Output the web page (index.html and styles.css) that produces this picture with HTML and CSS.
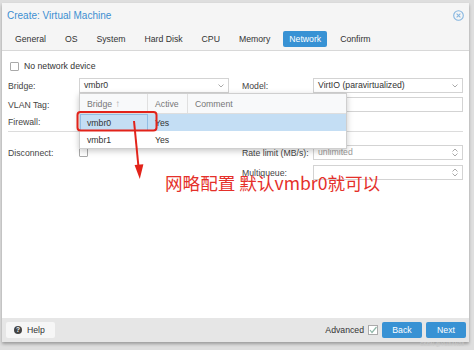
FILE: index.html
```html
<!DOCTYPE html>
<html lang="zh">
<head>
    <meta charset="UTF-8">
    <title>Create: Virtual Machine</title>
    <link rel="stylesheet" href="styles.css">
</head>
<body>
    <div class="screen">
        <div class="window">
            <div class="titlebar">
                <span class="title">Create: Virtual Machine</span>
                <svg class="close-icon" width="11" height="11" viewBox="0 0 11 11">
                    <circle cx="5.5" cy="5.5" r="4.8" fill="none" stroke="#86b6e0" stroke-width="1.1"/>
                    <path d="M3.6 3.6 L7.4 7.4 M7.4 3.6 L3.6 7.4" stroke="#86b6e0" stroke-width="1.1"/>
                </svg>
            </div>

            <div class="tabs">
                <span class="tab">General</span>
                <span class="tab">OS</span>
                <span class="tab">System</span>
                <span class="tab">Hard Disk</span>
                <span class="tab">CPU</span>
                <span class="tab">Memory</span>
                <span class="tab active">Network</span>
                <span class="tab">Confirm</span>
            </div>

            <div class="panel">
                <div class="check-row">
                    <span class="checkbox"></span>
                    <span>No network device</span>
                </div>

                <div class="form-grid top">
                    <div class="field-row">
                        <span class="label">Bridge:</span>
                        <div class="combo-wrap">
                            <div class="input combo">
                                <span>vmbr0</span>
                                <svg class="chev" width="6" height="4" viewBox="0 0 6 4"><polyline points="0.5,0.5 3,3 5.5,0.5" fill="none" stroke="#aaa"/></svg>
                            </div>
                            <div class="dropdown">
                                <div class="dd-row dd-head">
                                    <span class="col c1">Bridge <span class="sort">↑</span></span>
                                    <span class="col c2">Active</span>
                                    <span class="col c3">Comment</span>
                                </div>
                                <div class="dd-row selected">
                                    <span class="col c1 focus">vmbr0</span>
                                    <span class="col c2">Yes</span>
                                    <span class="col c3"></span>
                                </div>
                                <div class="dd-row">
                                    <span class="col c1">vmbr1</span>
                                    <span class="col c2">Yes</span>
                                    <span class="col c3"></span>
                                </div>
                            </div>
                        </div>
                    </div>
                    <div class="field-row">
                        <span class="label">Model:</span>
                        <div class="input combo">
                            <span>VirtIO (paravirtualized)</span>
                            <svg class="chev" width="6" height="4" viewBox="0 0 6 4"><polyline points="0.5,0.5 3,3 5.5,0.5" fill="none" stroke="#aaa"/></svg>
                        </div>
                    </div>
                    <div class="field-row">
                        <span class="label">VLAN Tag:</span>
                        <div class="input"></div>
                    </div>
                    <div class="field-row">
                        <span class="label">MAC address:</span>
                        <div class="input"></div>
                    </div>
                    <div class="field-row">
                        <span class="label">Firewall:</span>
                        <span class="checkbox"></span>
                    </div>
                    <div class="field-row"></div>
                </div>

                <div class="form-grid sep-row">
                    <div class="sep"></div>
                    <div class="sep"></div>
                </div>

                <div class="form-grid bottom">
                    <div class="field-row">
                        <span class="label">Disconnect:</span>
                        <span class="checkbox"></span>
                    </div>
                    <div class="field-row">
                        <span class="label">Rate limit (MB/s):</span>
                        <div class="input combo">
                            <span class="empty">unlimited</span>
                            <svg class="spin" width="6" height="9" viewBox="0 0 6 9"><polyline points="0.5,3.5 3,1 5.5,3.5" fill="none" stroke="#aaa"/><polyline points="0.5,5.5 3,8 5.5,5.5" fill="none" stroke="#aaa"/></svg>
                        </div>
                    </div>
                    <div class="field-row"></div>
                    <div class="field-row">
                        <span class="label">Multiqueue:</span>
                        <div class="input combo">
                            <span></span>
                            <svg class="spin" width="6" height="9" viewBox="0 0 6 9"><polyline points="0.5,3.5 3,1 5.5,3.5" fill="none" stroke="#aaa"/><polyline points="0.5,5.5 3,8 5.5,5.5" fill="none" stroke="#aaa"/></svg>
                        </div>
                    </div>
                </div>
            </div>

            <div class="footer">
                <button class="btn help"><span class="help-icon">?</span>Help</button>
                <span class="spacer"></span>
                <span class="advanced">Advanced</span>
                <svg class="adv-check" width="10" height="10" viewBox="0 0 10 10">
                    <rect x="0.5" y="0.5" width="9" height="9" fill="#fff" stroke="#aaa"/>
                    <polyline points="2,5 4,7.5 8.5,2" fill="none" stroke="#8fb7a8" stroke-width="1.2"/>
                </svg>
                <button class="btn primary">Back</button>
                <button class="btn primary">Next</button>
            </div>
        </div>

        <!-- annotation drawn over the screenshot -->
        <svg class="markup" width="474" height="350" viewBox="0 0 474 350">
            <rect x="77.5" y="112" width="79" height="18.5" rx="3" fill="none" stroke="#e2231a" stroke-width="2"/>
            <line x1="134" y1="121" x2="138.6" y2="168" stroke="#e2231a" stroke-width="2"/>
            <polygon points="134.6,165 143.4,164.2 139.8,179" fill="#e2231a"/>
        </svg>
        <div class="note">网略配置 默认vmbr0就可以</div>
        <div class="watermark">CSDN @YUJIAN23</div>
    </div>
</body>
</html>
```

FILE: styles.css
```css
body {
    margin: 0;
    background-color: #dedede;
    font-family: "Liberation Sans", Arial, sans-serif;
    font-size: 8.7px;
    color: #333;
}
.screen {
    position: relative;
    width: 474px;
    height: 350px;
    overflow: hidden;
}
.window {
    margin: 3px 0 0 2px;
    width: 467px;
    height: 339px;
    background-color: #f5f5f5;
    display: flex;
    flex-direction: column;
    box-shadow: 0 2px 3px rgba(0,0,0,0.3);
}
.titlebar {
    height: 25px;
    display: flex;
    align-items: center;
    justify-content: space-between;
    padding: 0 5px;
}
.title {
    font-size: 10px;
    color: #3d8fd1;
}
.tabs {
    height: 22px;
    display: flex;
    align-items: center;
    gap: 7px;
    padding-left: 7px;
    border-bottom: 1px solid #d8d8d8;
}
.tab {
    height: 16px;
    line-height: 16px;
    padding: 0 6px;
    border-radius: 2px;
    color: #333;
}
.tab.active {
    background-color: #3892d4;
    color: #fff;
}
.panel {
    flex: 1;
    background-color: #fff;
    padding: 10px 0 0 6px;
}
.check-row {
    height: 10px;
    display: flex;
    align-items: center;
    gap: 5px;
    padding-left: 2px;
    color: #333;
}
.checkbox {
    width: 9px;
    height: 9px;
    box-sizing: border-box;
    border: 1px solid #a9a9a9;
    border-radius: 1px;
    background-color: #fff;
}
.form-grid {
    display: grid;
    grid-template-columns: 221px 221px;
    column-gap: 13px;
}
.form-grid.top {
    margin-top: 7px;
    grid-template-rows: 15px 15px 12px;
    row-gap: 4px;
}
.form-grid.sep-row {
    margin-top: 3px;
}
.sep {
    border-top: 1px solid #dcdcdc;
}
.form-grid.bottom {
    margin-top: 13px;
    grid-template-rows: 15px 15px;
    row-gap: 5px;
}
.field-row {
    display: flex;
    align-items: center;
}
.label {
    width: 71px;
    flex: none;
    color: #444;
    white-space: nowrap;
}
.combo-wrap {
    position: relative;
    flex: 1;
    height: 15px;
}
.input {
    flex: 1;
    height: 15px;
    box-sizing: border-box;
    border: 1px solid #d3d3d3;
    background-color: #fff;
    padding: 0 4px;
    line-height: 13px;
    color: #333;
}
.combo {
    display: flex;
    align-items: center;
    justify-content: space-between;
}
.empty {
    color: #9a9a9a;
}
.dropdown {
    position: absolute;
    top: 15px;
    left: 0;
    width: 268px;
    background-color: #fff;
    border: 1px solid #cfcfcf;
    box-sizing: border-box;
    box-shadow: 0 2px 6px rgba(0,0,0,0.22);
    z-index: 5;
}
.dd-row {
    display: flex;
    height: 17px;
    align-items: stretch;
}
.dd-head {
    height: 19px;
    background-color: #f8f9fa;
    border-bottom: 1px solid #dedede;
    color: #777;
}
.col {
    display: flex;
    align-items: center;
    box-sizing: border-box;
}
.c1 {
    width: 68px;
    padding-left: 7px;
}
.c2 {
    width: 40px;
    padding-left: 7px;
}
.c3 {
    flex: 1;
    padding-left: 7px;
}
.dd-head .c1,
.dd-head .c2 {
    border-right: 1px solid #e0e0e0;
}
.sort {
    margin-left: 3px;
    color: #aaa;
    font-size: 10px;
}
.dd-row.selected {
    background-color: #c4def4;
}
.focus {
    border: 1px solid #92bde4;
    padding-left: 6px;
}
.footer {
    height: 24px;
    background-color: #e6e6e6;
    display: flex;
    align-items: center;
    gap: 4px;
    padding: 0 3px 0 4px;
}
.btn {
    height: 16px;
    border: none;
    border-radius: 2px;
    font-family: inherit;
    font-size: 8.7px;
    padding: 0;
    cursor: pointer;
}
.help {
    width: 49px;
    background-color: #f6f6f6;
    color: #333;
    display: flex;
    align-items: center;
    gap: 5px;
    padding-left: 8px;
}
.help-icon {
    width: 8px;
    height: 8px;
    border-radius: 50%;
    background-color: #444;
    color: #fff;
    font-size: 6.5px;
    font-weight: bold;
    line-height: 8px;
    text-align: center;
}
.spacer {
    flex: 1;
}
.advanced {
    color: #333;
}
.primary {
    width: 40px;
    background-color: #3892d4;
    color: #fff;
}
.markup {
    position: absolute;
    top: 0;
    left: 0;
    z-index: 10;
    pointer-events: none;
}
.note {
    position: absolute;
    left: 165px;
    top: 172px;
    z-index: 10;
    font-family: "Noto Sans CJK SC", sans-serif;
    font-size: 17.6px;
    line-height: 22px;
    color: #e5302a;
    white-space: nowrap;
}
.watermark {
    position: absolute;
    left: 420px;
    top: 341px;
    font-size: 5px;
    color: #c9c9c9;
    white-space: nowrap;
}
```
